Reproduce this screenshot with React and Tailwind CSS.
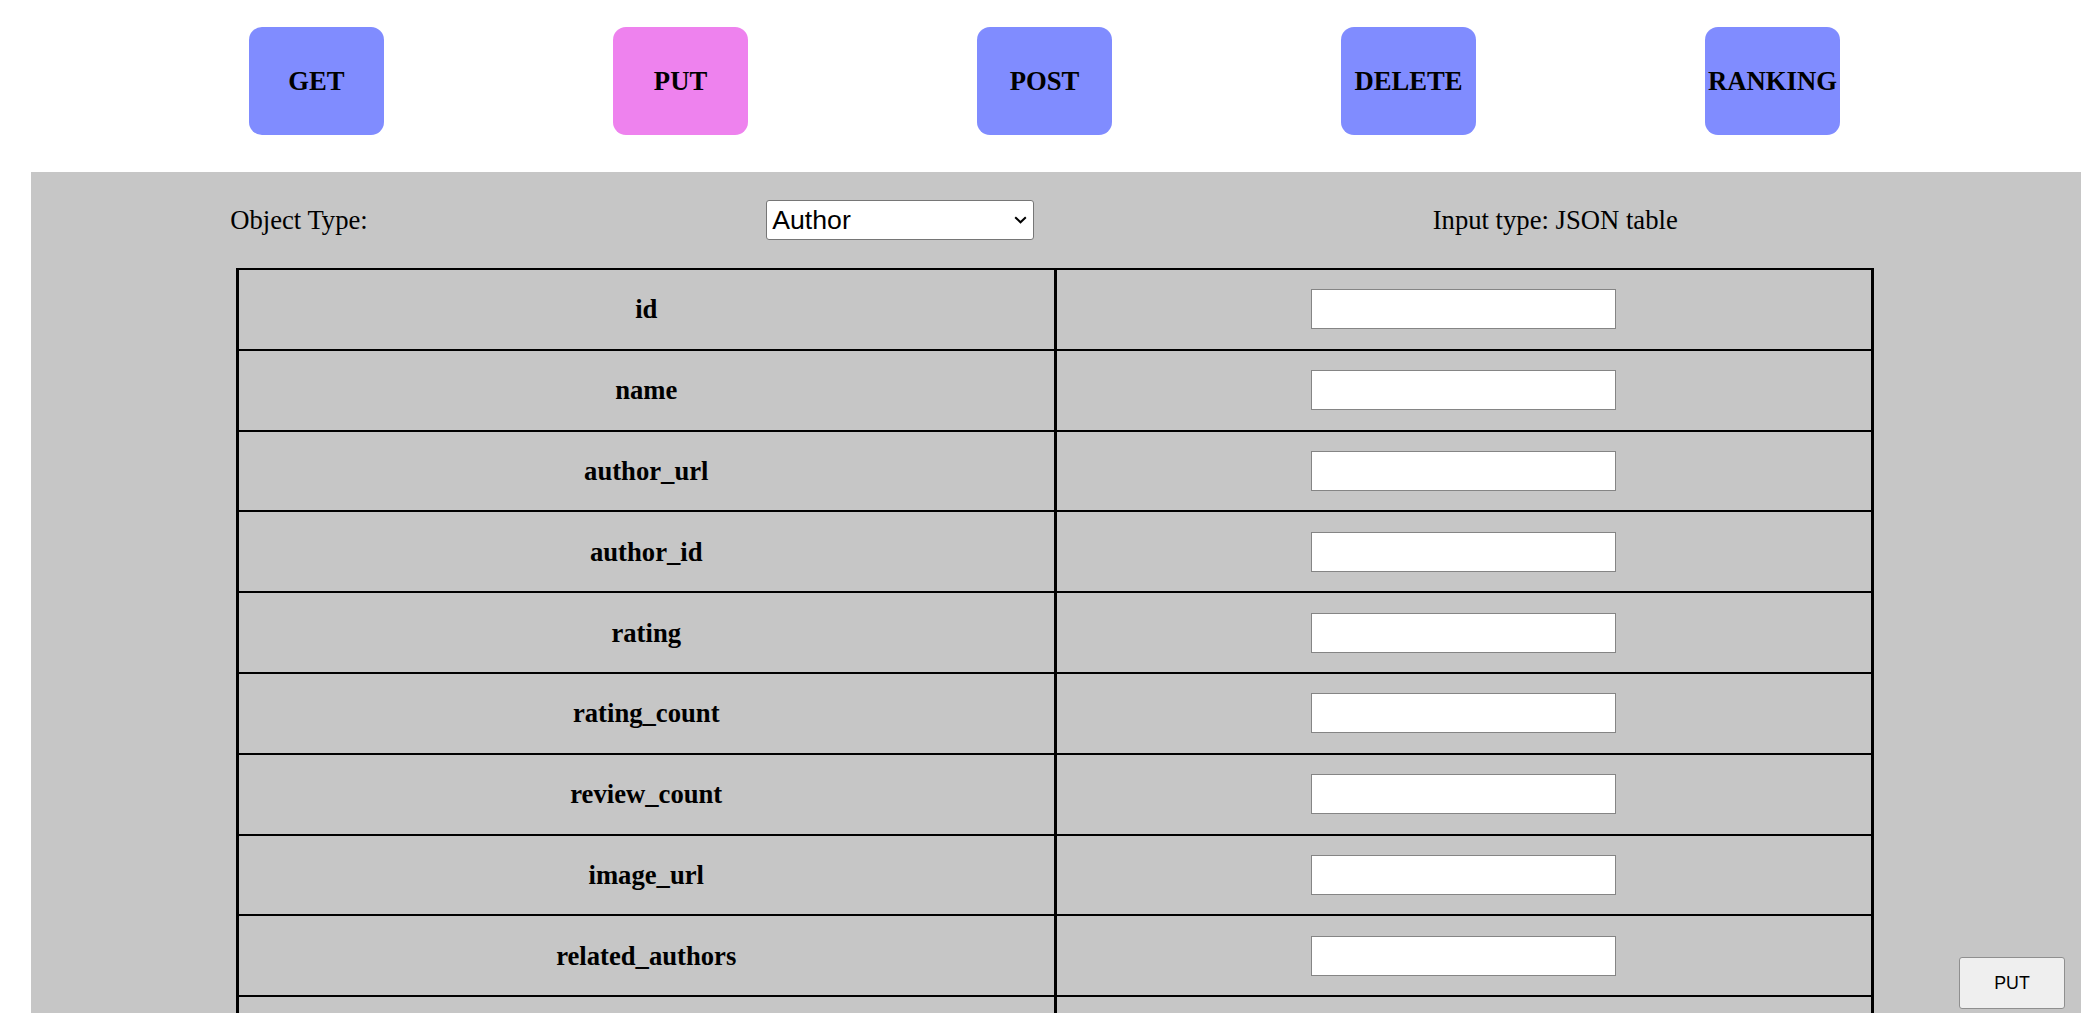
import React from 'react';

const methods = [
  { label: 'GET', active: false },
  { label: 'PUT', active: true },
  { label: 'POST', active: false },
  { label: 'DELETE', active: false },
  { label: 'RANKING', active: false },
];

const fields = [
  'id',
  'name',
  'author_url',
  'author_id',
  'rating',
  'rating_count',
  'review_count',
  'image_url',
  'related_authors',
  'book_ids',
];

function MethodButton({ label, active }) {
  return (
    <button
      type="button"
      className={
        'w-[135px] h-[108px] rounded-[13px] flex items-center justify-center font-bold text-[26.67px] text-black ' +
        (active ? 'bg-[#ee82ee]' : 'bg-[#808cff]')
      }
    >
      {label}
    </button>
  );
}

function TypeSelect() {
  return (
    <div className="relative w-[268px] h-[40px]">
      <select
        defaultValue="Author"
        className="appearance-none w-full h-full bg-white border border-[#767676] rounded-[3px] pl-[5px] text-[26.67px] leading-none text-black font-['Liberation_Sans',Arial,sans-serif] outline-none"
      >
        <option>Author</option>
        <option>Book</option>
      </select>
      <svg
        className="absolute left-[248px] top-[16px] pointer-events-none"
        width="13"
        height="8"
        viewBox="0 0 13 8"
        fill="none"
      >
        <path d="M1.2 1.2 L6.5 6.3 L11.8 1.2" stroke="#000" strokeWidth="2" />
      </svg>
    </div>
  );
}

export default function App() {
  return (
    <div className="relative h-screen overflow-hidden bg-white text-black font-['Liberation_Serif','Times_New_Roman',serif]">
      {/* method tabs */}
      <div className="flex h-[172px] pt-[27px] pl-[249px] gap-[229px]">
        {methods.map((m) => (
          <MethodButton key={m.label} {...m} />
        ))}
      </div>

      {/* form */}
      <div className="ml-[31px] bg-[#c6c6c6] h-[841px] pt-[28px]">
        <div className="flex w-[1846px] h-[40px] items-center justify-around text-[26.67px]">
          <span>Object Type:</span>
          <TypeSelect />
          <span>Input type: JSON table</span>
        </div>

        <table className="ml-[205px] mt-[28px] w-[1638px] border-collapse table-fixed">
          <tbody>
            {fields.map((f) => (
              <tr key={f} className="h-[80.8px]">
                <td className="border-y-2 border-x-[3px] border-black text-center align-middle font-bold text-[26.67px]">
                  {f}
                </td>
                <td className="border-y-2 border-x-[3px] border-black text-center align-middle">
                  <input
                    type="text"
                    className="inline-block align-middle w-[305px] h-[40px] bg-white border border-[#858585] outline-none"
                  />
                </td>
              </tr>
            ))}
          </tbody>
        </table>
      </div>

      <button
        type="button"
        className="absolute right-[16px] bottom-[4px] w-[106px] h-[52px] bg-[#efefef] border border-[#8f8f8f] rounded-[3px] text-[17.78px] text-black font-['Liberation_Sans',Arial,sans-serif]"
      >
        PUT
      </button>
    </div>
  );
}
